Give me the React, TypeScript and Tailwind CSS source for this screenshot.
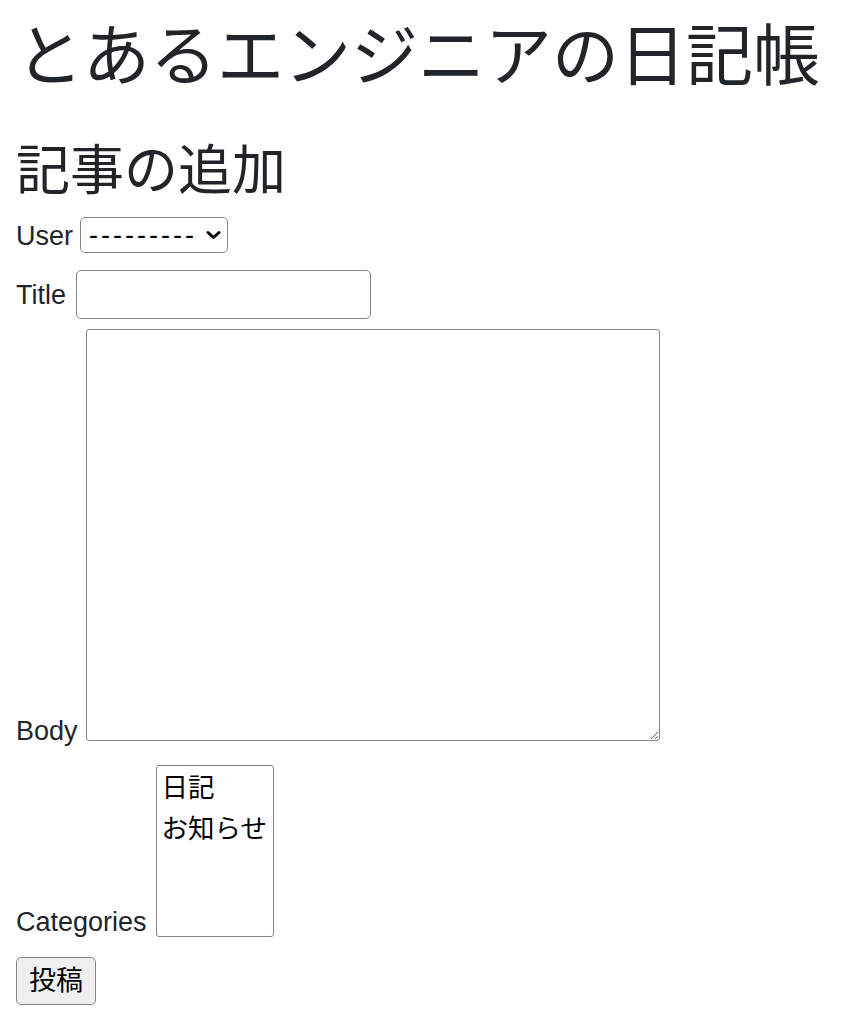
export default function App() {
  return (
    <div className="min-h-screen bg-white px-4 text-[#212529] [font-family:'Liberation_Sans','Noto_Sans_CJK_JP',sans-serif]">
      <h1 className="pt-[23px] text-[67px] font-normal leading-none">とあるエンジニアの日記帳</h1>
      <h2 className="mt-[54px] text-[54px] font-normal leading-none">記事の追加</h2>

      <form className="flex flex-col items-start">
        {/* User */}
        <div className="mt-[19px] flex items-center gap-[7px]">
          <label className="mt-[3px] text-[27px] leading-none">User</label>
          <div className="relative h-[36px] w-[148px] rounded-[5px] border border-[#858585] bg-white">
            <span className="absolute left-[8px] top-[3px] text-[27px] font-medium leading-[28px] tracking-[3px] text-black">---------</span>
            <svg
              className="absolute right-[6px] top-[12px]"
              width="15"
              height="10"
              viewBox="0 0 15 10"
              fill="none"
              stroke="black"
              strokeWidth="3"
              strokeLinecap="round"
              strokeLinejoin="round"
            >
              <path d="M2 2.5 L7.5 7.5 L13 2.5" />
            </svg>
          </div>
        </div>

        {/* Title */}
        <div className="mt-[17px] flex items-center gap-[10px]">
          <label className="mt-[2px] text-[27px] leading-none">Title</label>
          <input
            type="text"
            className="h-[49px] w-[295px] rounded-[5px] border border-[#858585] bg-white px-2 text-[27px] outline-none"
          />
        </div>

        {/* Body */}
        <div className="mt-[10px] flex items-end gap-[8px]">
          <label className="mb-[-4px] text-[27px] leading-none">Body</label>
          <textarea className="block h-[412px] w-[574px] rounded-[3px] border border-[#858585] bg-white outline-none" />
        </div>

        {/* Categories */}
        <div className="mt-[24px] flex items-end gap-[9px]">
          <label className="mb-[1px] text-[27px] leading-none">Categories</label>
          <div className="h-[172px] w-[118px] rounded-[3px] border border-[#858585] bg-white pl-[5px] pt-[2px] text-[26.5px] leading-[41px] whitespace-nowrap text-black">
            <div>日記</div>
            <div>お知らせ</div>
          </div>
        </div>

        <button
          type="submit"
          className="mt-[20px] h-[48px] w-[80px] rounded-[5px] border border-[#858585] bg-[#efefef] text-[27px] leading-none text-black"
        >
          投稿
        </button>
      </form>
    </div>
  );
}
